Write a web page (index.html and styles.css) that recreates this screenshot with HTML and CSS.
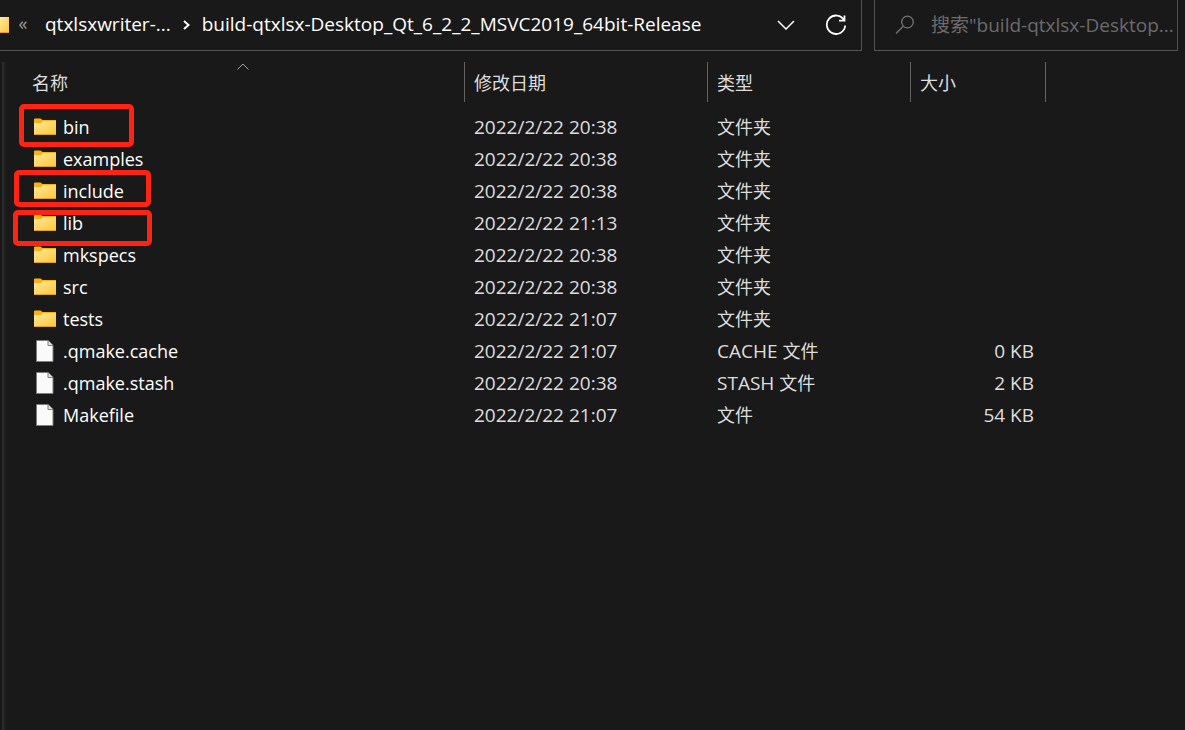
FILE: index.html
```html
<!DOCTYPE html>
<html lang="zh-CN">
  <head>
    <meta charset="UTF-8" />
    <meta name="viewport" content="width=device-width, initial-scale=1.0" />
    <title>build-qtxlsx-Desktop_Qt_6_2_2_MSVC2019_64bit-Release</title>
    <link rel="stylesheet" href="styles.css">
  </head>
  <body>
    <!-- Shared icons -->
    <svg class="sprite" aria-hidden="true">
      <defs>
        <linearGradient id="folder-fill" x1="0" y1="0" x2="1" y2="1">
          <stop offset="0" stop-color="#ffe8a2" />
          <stop offset="1" stop-color="#fec832" />
        </linearGradient>
      </defs>
      <symbol id="folder" viewBox="0 0 22 18">
        <path d="M0 1.500Q0 .5 1 .5H6.500L8.500 2H22V17H0Z" fill="#f9b115" />
        <path d="M0 5H7L9 3H22V16H0Z" fill="url(#folder-fill)" />
        <path d="M0 16H22V17H0Z" fill="#e8a11a" />
      </symbol>
      <symbol id="file" viewBox="0 0 18 22">
        <path d="M.5.5H12L17 5.500V21.500H.5Z" fill="#fafafa" stroke="#7d7d7d" />
        <path d="M12 .5V5.500H17" fill="#e6e6e6" stroke="#7d7d7d" />
      </symbol>
    </svg>

    <!-- Address bar and search -->
    <div class="toolbar">
      <nav class="address">
        <svg class="address-folder" viewBox="0 0 9 16"><path d="M0 0H9V15H0Z" fill="url(#folder-fill)" /><path d="M0 15H9V16H0Z" fill="#e8a11a" /></svg>
        <button class="crumb-more" aria-label="更多">«</button>
        <button class="crumb crumb-parent">qtxlsxwriter-...</button>
        <svg class="crumb-arrow" viewBox="0 0 7 10"><path d="M1 1L5.500 5L1 9" /></svg>
        <button class="crumb">build-qtxlsx-Desktop_Qt_6_2_2_MSVC2019_64bit-Release</button>
        <div class="address-tools">
          <button aria-label="历史记录">
            <svg class="icon-down" viewBox="0 0 18 10"><path d="M1 1L9 9L17 1" /></svg>
          </button>
          <button aria-label="刷新">
            <svg class="icon-refresh" viewBox="0 0 22 22"><path d="M19.200 6.500A9.200 9.200 0 1 0 20.200 11.500M19.500 1.500V6.700H14" /></svg>
          </button>
        </div>
      </nav>
      <label class="search">
        <svg class="icon-search" viewBox="0 0 20 20"><circle cx="12.500" cy="7" r="5.800" /><path d="M8.200 11.300L1 18.500" /></svg>
        <input type="text" aria-label="搜索" placeholder="搜索&quot;build-qtxlsx-Desktop..." />
      </label>
    </div>

    <!-- File list -->
    <main class="files">
      <table>
        <colgroup>
          <col class="col-name" />
          <col class="col-date" />
          <col class="col-type" />
          <col class="col-size" />
          <col />
        </colgroup>
        <thead>
          <tr>
            <th>
              <svg class="sort" viewBox="0 0 12 7"><path d="M.5 6.500L6 1L11.500 6.500" /></svg>
              <button>名称</button>
            </th>
            <th><button>修改日期</button></th>
            <th><button>类型</button></th>
            <th><button>大小</button></th>
            <td></td>
          </tr>
        </thead>
        <tbody>
          <tr><td><div class="name"><svg class="folder"><use href="#folder" /></svg>bin</div></td><td>2022/2/22 20:38</td><td><span class="zh">文件夹</span></td><td></td><td></td></tr>
          <tr><td><div class="name"><svg class="folder"><use href="#folder" /></svg>examples</div></td><td>2022/2/22 20:38</td><td><span class="zh">文件夹</span></td><td></td><td></td></tr>
          <tr><td><div class="name"><svg class="folder"><use href="#folder" /></svg>include</div></td><td>2022/2/22 20:38</td><td><span class="zh">文件夹</span></td><td></td><td></td></tr>
          <tr><td><div class="name"><svg class="folder"><use href="#folder" /></svg>lib</div></td><td>2022/2/22 21:13</td><td><span class="zh">文件夹</span></td><td></td><td></td></tr>
          <tr><td><div class="name"><svg class="folder"><use href="#folder" /></svg>mkspecs</div></td><td>2022/2/22 20:38</td><td><span class="zh">文件夹</span></td><td></td><td></td></tr>
          <tr><td><div class="name"><svg class="folder"><use href="#folder" /></svg>src</div></td><td>2022/2/22 20:38</td><td><span class="zh">文件夹</span></td><td></td><td></td></tr>
          <tr><td><div class="name"><svg class="folder"><use href="#folder" /></svg>tests</div></td><td>2022/2/22 21:07</td><td><span class="zh">文件夹</span></td><td></td><td></td></tr>
          <tr><td><div class="name"><svg class="file"><use href="#file" /></svg>.qmake.cache</div></td><td>2022/2/22 21:07</td><td>CACHE <span class="zh">文件</span></td><td class="size">0 KB</td><td></td></tr>
          <tr><td><div class="name"><svg class="file"><use href="#file" /></svg>.qmake.stash</div></td><td>2022/2/22 20:38</td><td>STASH <span class="zh">文件</span></td><td class="size">2 KB</td><td></td></tr>
          <tr><td><div class="name"><svg class="file"><use href="#file" /></svg>Makefile</div></td><td>2022/2/22 21:07</td><td><span class="zh">文件</span></td><td class="size">54 KB</td><td></td></tr>
        </tbody>
      </table>
      <!-- Red boxes drawn over bin, include and lib -->
      <div class="mark mark-bin"></div>
      <div class="mark mark-include"></div>
      <div class="mark mark-lib"></div>
    </main>
  </body>
</html>
```
FILE: styles.css
```css
* {
  box-sizing: border-box;
}
body {
  display: flex;
  flex-direction: column;
  min-height: 100vh;
  margin: 0;
  background: #191919;
  color: #dedede;
  font-family: "Open Sans", "Noto Sans CJK SC", sans-serif;
  font-size: 19px;
  line-height: 24px;
}
svg {
  flex: none;
  fill: none;
}
button {
  padding: 0;
  border: none;
  background: none;
  color: inherit;
  font: inherit;
  white-space: nowrap;
}
.sprite {
  position: absolute;
  width: 0;
  height: 0;
}

/* Toolbar */
.toolbar {
  display: flex;
  gap: 12px;
  height: 51px;
  padding-right: 7px;
}
.address {
  display: flex;
  flex: 1;
  align-items: center;
  min-width: 0;
  border: solid #535353;
  border-width: 0 1px 1px 0;
  color: #fff;
}
.address-folder {
  width: 9px;
  height: 16px;
}
.crumb-more {
  width: 28px;
  padding-bottom: 4px;
  color: #9a9a9a;
  font-size: 18px;
}
.crumb {
  padding-bottom: 2px;
}
.crumb-parent {
  margin-left: 8px;
}
.crumb-arrow {
  width: 7px;
  height: 10px;
  margin: 0 12px;
  stroke: #fff;
  stroke-width: 2;
}
.address-tools {
  display: flex;
  gap: 30px;
  margin-left: auto;
  padding-right: 14px;
}
.address-tools button {
  display: flex;
  align-items: center;
}
.icon-down {
  width: 18px;
  height: 10px;
  stroke: #fff;
  stroke-width: 1.5;
}
.icon-refresh {
  width: 22px;
  height: 22px;
  stroke: #fff;
  stroke-width: 1.8;
}
.search {
  display: flex;
  align-items: center;
  gap: 16px;
  width: 304px;
  padding-left: 20px;
  border: solid #535353;
  border-width: 0 1px 1px;
}
.icon-search {
  width: 20px;
  height: 20px;
  stroke: #747474;
  stroke-width: 1.3;
}
.search input {
  flex: 1;
  min-width: 0;
  padding: 0;
  border: none;
  outline: none;
  background: none;
  color: #dedede;
  font: inherit;
}
.search input::placeholder {
  color: #6b6b6b;
  opacity: 1;
}

/* File list */
.files {
  position: relative;
  flex: 1;
  margin: 11px 0 0 2px;
  padding-left: 16px;
  border-left: 2px solid #2b2b2b;
  box-shadow: inset 2px 0 #202020;
}
table {
  width: 100%;
  border-collapse: separate;
  border-spacing: 0;
  table-layout: fixed;
}
.col-name {
  width: 445px;
}
.col-date {
  width: 243px;
}
.col-type {
  width: 203px;
}
.col-size {
  width: 135px;
}
th {
  position: relative;
  height: 40px;
  padding: 2px 0 0 9px;
  border-right: 1px solid #636363;
  font-size: 18px;
  font-weight: normal;
  text-align: left;
}
th:first-child {
  padding-left: 12px;
}
.sort {
  position: absolute;
  top: 1px;
  left: 50%;
  width: 12px;
  height: 7px;
  margin-left: -5px;
  stroke: #a0a0a0;
}
tbody::before {
  content: "";
  display: block;
  height: 9px;
}
tbody td {
  height: 32px;
  padding: 0 0 0 9px;
  white-space: nowrap;
}
tbody td:first-child {
  padding-left: 14px;
  color: #fff;
}
.zh {
  font-size: 18px;
}
.name {
  display: flex;
  align-items: center;
  gap: 7px;
  font-size: 18px;
}
.folder {
  width: 22px;
  height: 18px;
}
.file {
  width: 18px;
  height: 22px;
  margin: 0 2px;
}
tbody .size {
  padding-right: 12px;
  text-align: right;
}

/* Red boxes */
.mark {
  position: absolute;
  border: 5px solid #ff2313;
  border-radius: 5px;
}
.mark-bin {
  top: 42px;
  left: 15px;
  width: 115px;
  height: 43px;
}
.mark-include {
  top: 108px;
  left: 10px;
  width: 137px;
  height: 37px;
}
.mark-lib {
  top: 148px;
  left: 9px;
  width: 139px;
  height: 36px;
}
```
